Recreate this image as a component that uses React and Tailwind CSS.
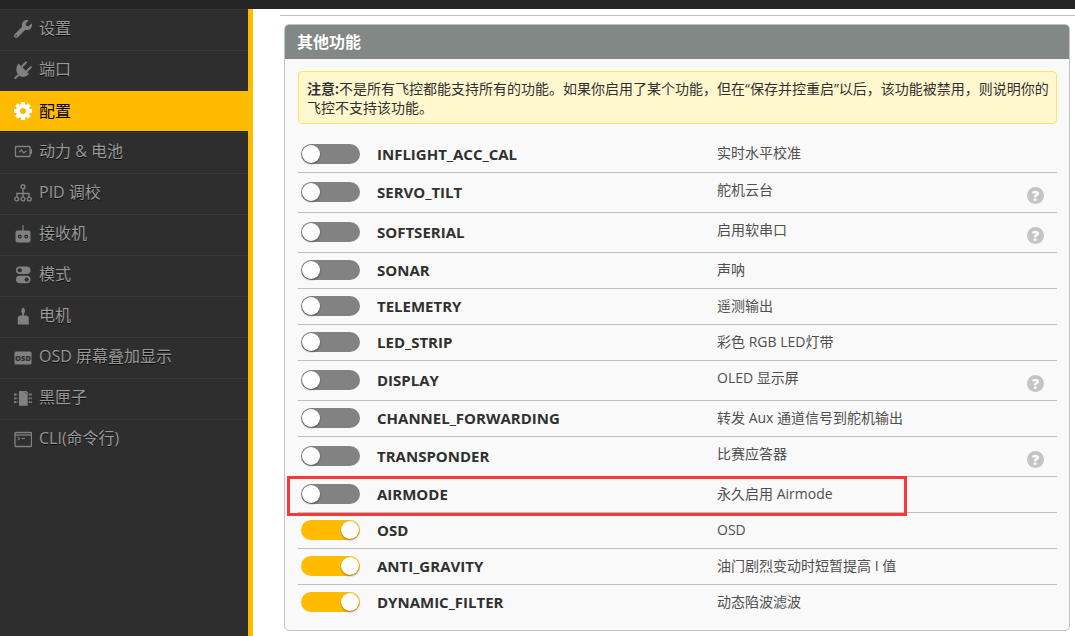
import { useState } from "react";
import { FaWrench } from "react-icons/fa";

const iconProps = {
  viewBox: "0 0 18 18",
  className: "h-[18px] w-[18px] shrink-0",
  "aria-hidden": true,
};

function PlugIcon() {
  return (
    <svg {...iconProps} fill="currentColor" stroke="currentColor">
      <path d="M4.500 2.500 15 13C12 16 8 17 5 14.500C1.500 11.500 1.500 6 4.500 2.500Z" stroke="none" />
      <path
        d="M4.500 14 1.300 17M8.300 5.300 12 1.500M13 10 16.800 6.300"
        strokeWidth="2"
        strokeLinecap="round"
      />
    </svg>
  );
}

function GearIcon() {
  return (
    <svg {...iconProps} fill="none" stroke="currentColor">
      <circle cx="9" cy="9" r="5" strokeWidth="4" />
      <path
        d="M9 0v4M9 14v4M0 9h4M14 9h4M2.600 2.600l3 3M12.400 12.400l3 3M15.400 2.600l-3 3M5.600 12.400l-3 3"
        strokeWidth="4"
      />
    </svg>
  );
}

function BatteryIcon() {
  return (
    <svg {...iconProps} fill="none" stroke="currentColor">
      <rect x="1.500" y="3.500" width="14.500" height="10" rx="0.500" strokeWidth="1.300" />
      <path d="M17.200 6v5" strokeWidth="1.600" />
      <path d="M5 9.300 7.300 7 9.800 10 12.500 7.700" strokeWidth="1.200" />
    </svg>
  );
}

function TuningIcon() {
  return (
    <svg {...iconProps} fill="none" stroke="currentColor" strokeWidth="1.400">
      <circle cx="9" cy="2.700" r="1.900" />
      <circle cx="2.700" cy="15" r="1.900" />
      <circle cx="9" cy="15" r="1.900" />
      <circle cx="15.300" cy="15" r="1.900" />
      <path d="M9 5v8M3 13V9.500h12V13" />
    </svg>
  );
}

function ReceiverIcon() {
  return (
    <svg {...iconProps} fill="currentColor">
      <path d="M8.400 0h1.200v6H8.400z" />
      <path
        fillRule="evenodd"
        d="M3.500 5.500h11a2 2 0 0 1 2 2v8a2 2 0 0 1-2 2h-11a2 2 0 0 1-2-2v-8a2 2 0 0 1 2-2ZM5.800 9.500a2 2 0 1 0 0 4 2 2 0 0 0 0-4Zm6.400 0a2 2 0 1 0 0 4 2 2 0 0 0 0-4Z"
      />
      <circle cx="5.800" cy="11.500" r="0.700" />
      <circle cx="12.200" cy="11.500" r="0.700" />
    </svg>
  );
}

function ModesIcon() {
  return (
    <svg {...iconProps} fill="currentColor">
      <rect x="2" y="0.500" width="14.500" height="7.500" rx="3.750" />
      <rect x="2" y="9.800" width="14.500" height="7.500" rx="3.750" />
      <circle cx="5.800" cy="4.250" r="2.100" fill="#2e2e2e" />
      <circle cx="12.700" cy="13.550" r="2.100" fill="#2e2e2e" />
    </svg>
  );
}

function MotorIcon() {
  return (
    <svg {...iconProps} fill="currentColor">
      <path d="M9.200 0.300C10.800 2 11.500 3.800 10.800 5.500L10 6.500V8.500h2.500C14 9 14.800 10 14.800 11v6.500h-11V11C3.800 10 4.600 9 6.100 8.500h2.200V6.500L7.500 5.500C6.900 3.800 7.600 2 9.200 0.300Z" />
    </svg>
  );
}

function OsdIcon() {
  return (
    <svg {...iconProps}>
      <rect x="0.500" y="3.500" width="17" height="13" rx="1.500" fill="currentColor" />
      <text
        x="9"
        y="12.800"
        textAnchor="middle"
        fontSize="7.500"
        fontWeight="800"
        fontFamily="Open Sans, sans-serif"
        fill="#2e2e2e"
      >
        OSD
      </text>
    </svg>
  );
}

function BlackboxIcon() {
  return (
    <svg {...iconProps} fill="currentColor" stroke="currentColor">
      <path
        fillRule="evenodd"
        stroke="none"
        d="M5 2h7.500l1.200 1.200v13.500H5ZM11 3.500v1h1v-1Z"
      />
      <path
        d="M0 5.500h3.500M0 9.300h3.500M0 13.200h3.500M14.700 5.500H18M14.700 9.300H18M14.700 13.200H18"
        strokeWidth="1.800"
        strokeDasharray="2 0.500"
      />
    </svg>
  );
}

function CliIcon() {
  return (
    <svg {...iconProps} fill="none" stroke="currentColor" strokeWidth="1.300">
      <rect x="1" y="2.500" width="16.500" height="14" rx="0.800" />
      <path d="M1 5h16.500" />
      <path d="M3.500 7 6 8.500 3.500 10M7.500 8.500h3.500" strokeWidth="1" />
    </svg>
  );
}

const tabs = [
  { label: "设置", icon: <FaWrench className="h-[18px] w-[18px] shrink-0" /> },
  { label: "端口", icon: <PlugIcon /> },
  { label: "配置", icon: <GearIcon /> },
  { label: "动力 & 电池", icon: <BatteryIcon /> },
  { label: "PID 调校", icon: <TuningIcon /> },
  { label: "接收机", icon: <ReceiverIcon /> },
  { label: "模式", icon: <ModesIcon /> },
  { label: "电机", icon: <MotorIcon /> },
  { label: "OSD 屏幕叠加显示", icon: <OsdIcon /> },
  { label: "黑匣子", icon: <BlackboxIcon /> },
  { label: "CLI(命令行)", icon: <CliIcon /> },
];

const features = [
  { name: "INFLIGHT_ACC_CAL", desc: "实时水平校准" },
  { name: "SERVO_TILT", desc: "舵机云台", help: true },
  { name: "SOFTSERIAL", desc: "启用软串口", help: true },
  { name: "SONAR", desc: "声呐" },
  { name: "TELEMETRY", desc: "遥测输出" },
  { name: "LED_STRIP", desc: "彩色 RGB LED灯带" },
  { name: "DISPLAY", desc: "OLED 显示屏", help: true },
  { name: "CHANNEL_FORWARDING", desc: "转发 Aux 通道信号到舵机输出" },
  { name: "TRANSPONDER", desc: "比赛应答器", help: true },
  { name: "AIRMODE", desc: "永久启用 Airmode", marked: true },
  { name: "OSD", desc: "OSD" },
  { name: "ANTI_GRAVITY", desc: "油门剧烈变动时短暂提高 I 值" },
  { name: "DYNAMIC_FILTER", desc: "动态陷波滤波" },
];

function Sidebar({ active, onSelect }) {
  return (
    <nav className="w-[253px] shrink-0 border-r-[5px] border-[#ffbb00] bg-[#2e2e2e]">
      <ul>
        {tabs.map((tab) => (
          <li key={tab.label}>
            <a
              href="#"
              onClick={(e) => {
                e.preventDefault();
                onSelect(tab.label);
              }}
              className={`flex h-[41px] items-center gap-[7px] border-t border-b pb-0.5 pl-3.5 text-base ${
                tab.label === active
                  ? "border-t-[#ffbb00] border-b-[#222222] bg-[#ffbb00] text-white"
                  : "border-t-[#3a3a3a] border-b-[#222222] text-[#818181] last:border-b-0"
              }`}
            >
              {tab.icon}
              <span
                className={
                  tab.label === active
                    ? "text-black"
                    : "pb-0.5 text-[#999999] [text-shadow:0_1px_rgba(0,0,0,0.8)]"
                }
              >
                {tab.label}
              </span>
            </a>
          </li>
        ))}
      </ul>
    </nav>
  );
}

function FeatureRow({ feature, checked, onToggle }) {
  const id = `feature-${feature.name}`;

  return (
    <tr
      className={`border-b border-[#bfbfbf] last:border-b-0 ${
        feature.help ? "h-10" : "h-9"
      }`}
    >
      <td className="relative pl-[3px]">
        <input
          id={id}
          type="checkbox"
          checked={checked}
          onChange={onToggle}
          className="block h-5 w-[59px] cursor-pointer appearance-none rounded-full bg-[#828282] p-px before:block before:size-[18px] before:rounded-full before:bg-white before:shadow-[0_1px_2px_rgba(0,0,0,0.4)] checked:bg-[#ffbb00] checked:before:ml-auto"
        />
        {feature.marked && (
          <span className="pointer-events-none absolute -top-px -left-[11px] h-10 w-[620px] border-3 border-[#fb3838]" />
        )}
      </td>
      <th scope="row" className="text-left text-[15px] leading-5 font-bold text-[#303030]">
        <label htmlFor={id}>{feature.name}</label>
      </th>
      <td className="text-[#4f4f4f]">
        <div
          className={`flex items-start justify-between pr-[13px] leading-[19px] ${
            feature.help ? "h-6" : "pb-0.5"
          }`}
        >
          {feature.desc}
          {feature.help && (
            <button
              type="button"
              aria-label={`${feature.name} help`}
              className="flex size-[17px] items-center justify-center self-end rounded-full bg-[#c4c4c4] text-sm leading-none font-extrabold text-white"
            >
              ?
            </button>
          )}
        </div>
      </td>
    </tr>
  );
}

export default function App() {
  const [active, setActive] = useState("配置");
  const [enabled, setEnabled] = useState(["OSD", "ANTI_GRAVITY", "DYNAMIC_FILTER"]);

  const toggle = (name) => {
    setEnabled((prev) =>
      prev.includes(name) ? prev.filter((n) => n !== name) : [...prev, name]
    );
  };

  return (
    <div className="flex min-h-screen flex-col bg-white font-['Open_Sans','Noto_Sans_CJK_SC',sans-serif] text-sm">
      <header className="h-[9px] bg-[#242424]" />
      <div className="flex grow">
        <Sidebar active={active} onSelect={setActive} />

        <main className="min-w-0 grow pt-1.5 pl-[27px]">
          <hr className="border-[#bfbfbf]" />
          <section className="mt-2 mr-[5px] ml-1 overflow-hidden rounded-[5px] border border-[#c4c4c4] bg-[#f9f9f9]">
            <h2 className="flex h-[34px] items-center bg-[#828885] px-3 text-base font-bold text-white">
              其他功能
            </h2>

            <div className="pt-3 pr-3 pb-2.5 pl-[13px]">
              <p className="rounded-[4px] border border-[#ffe55f] bg-[#fff7cd] pt-[7px] pr-1 pb-1.5 pl-2 leading-[19px] text-[#303030]">
                <strong>注意:</strong>
                不是所有飞控都能支持所有的功能。如果你启用了某个功能，但在“保存并控重启”以后，该功能被禁用，则说明你的飞控不支持该功能。
              </p>

              <table className="mt-3 w-full table-fixed border-collapse">
                <colgroup>
                  <col className="w-[79px]" />
                  <col className="w-[340px]" />
                  <col />
                </colgroup>
                <tbody>
                  {features.map((feature) => (
                    <FeatureRow
                      key={feature.name}
                      feature={feature}
                      checked={enabled.includes(feature.name)}
                      onToggle={() => toggle(feature.name)}
                    />
                  ))}
                </tbody>
              </table>
            </div>
          </section>
        </main>
      </div>
    </div>
  );
}
